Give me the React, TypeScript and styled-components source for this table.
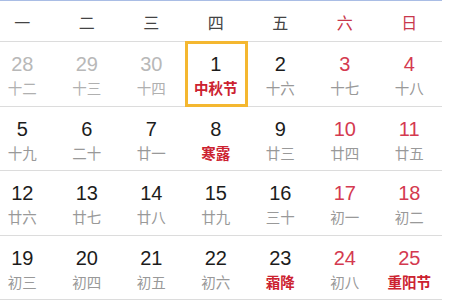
import * as React from "react";
import styled, { createGlobalStyle } from "styled-components";

type Day = {
  n: number;
  lunar: string;
  other?: boolean;
  fest?: boolean;
  today?: boolean;
};

const heads = ["一", "二", "三", "四", "五", "六", "日"];

const weeks: Day[][] = [
  [
    { n: 28, lunar: "十二", other: true },
    { n: 29, lunar: "十三", other: true },
    { n: 30, lunar: "十四", other: true },
    { n: 1, lunar: "中秋节", fest: true, today: true },
    { n: 2, lunar: "十六" },
    { n: 3, lunar: "十七" },
    { n: 4, lunar: "十八" },
  ],
  [
    { n: 5, lunar: "十九" },
    { n: 6, lunar: "二十" },
    { n: 7, lunar: "廿一" },
    { n: 8, lunar: "寒露", fest: true },
    { n: 9, lunar: "廿三" },
    { n: 10, lunar: "廿四" },
    { n: 11, lunar: "廿五" },
  ],
  [
    { n: 12, lunar: "廿六" },
    { n: 13, lunar: "廿七" },
    { n: 14, lunar: "廿八" },
    { n: 15, lunar: "廿九" },
    { n: 16, lunar: "三十" },
    { n: 17, lunar: "初一" },
    { n: 18, lunar: "初二" },
  ],
  [
    { n: 19, lunar: "初三" },
    { n: 20, lunar: "初四" },
    { n: 21, lunar: "初五" },
    { n: 22, lunar: "初六" },
    { n: 23, lunar: "霜降", fest: true },
    { n: 24, lunar: "初八" },
    { n: 25, lunar: "重阳节", fest: true },
  ],
];

const App = () => {
  return (
    <Page>
      <GlobalStyle />
      <Calendar>
        <Head>
          {heads.map((h, i) => (
            <HeadCell key={h} $weekend={i >= 5}>
              {h}
            </HeadCell>
          ))}
        </Head>
        {weeks.map((w, wi) => (
          <Week key={wi}>
            {w.map((d, i) => (
              <Cell key={d.n} $today={d.today}>
                <Num $other={d.other} $weekend={i >= 5 && !d.other}>
                  {d.n}
                </Num>
                <Lunar $other={d.other} $fest={d.fest}>
                  {d.lunar}
                </Lunar>
              </Cell>
            ))}
          </Week>
        ))}
      </Calendar>
    </Page>
  );
};
export default App;

const GlobalStyle = createGlobalStyle`
  html, body {
    margin: 0;
    padding: 0;
    background: #fff;
  }
  body {
    font-family: "Liberation Sans", "Noto Sans CJK SC", sans-serif;
  }
`;

const Page = styled.div`
  width: 450px;
  height: 300px;
  overflow: hidden;
  background: #fff;
`;

const Calendar = styled.div`
  width: 451.5px;
  margin-left: -10px;
  border-top: 1px solid #a9bde5;
`;

const Head = styled.div`
  display: grid;
  grid-template-columns: repeat(7, 64.5px);
  height: 41px;
  box-sizing: border-box;
  border-bottom: 1px solid #dcdcdc;
  align-items: center;
`;

const HeadCell = styled.div<{ $weekend?: boolean }>`
  text-align: center;
  font-family: "Noto Sans CJK SC", sans-serif;
  font-size: 16px;
  line-height: 20px;
  padding-top: 1px;
  color: ${(p) => (p.$weekend ? "#c8384c" : "#444")};
`;

const Week = styled.div`
  display: grid;
  grid-template-columns: repeat(7, 64.5px);
  height: 64.5px;
  box-sizing: border-box;
  border-bottom: 1px solid #dcdcdc;
`;

const Cell = styled.div<{ $today?: boolean }>`
  position: relative;
  display: flex;
  flex-direction: column;
  align-items: center;
  padding-top: 10px;
  &::after {
    content: "";
    display: ${(p) => (p.$today ? "block" : "none")};
    position: absolute;
    left: 1px;
    right: 0;
    top: -1px;
    bottom: -1px;
    border: 3px solid #f4b730;
  }
`;

const Num = styled.div<{ $other?: boolean; $weekend?: boolean }>`
  font-family: "Liberation Sans", Arial, sans-serif;
  font-size: 20px;
  line-height: 24px;
  color: ${(p) => (p.$other ? "#b8b8b8" : p.$weekend ? "#d43a50" : "#1c1c1c")};
`;

const Lunar = styled.div<{ $other?: boolean; $fest?: boolean }>`
  font-family: "Noto Sans CJK SC", sans-serif;
  font-size: 14.5px;
  line-height: 24px;
  font-weight: ${(p) => (p.$fest ? 700 : 400)};
  color: ${(p) => (p.$fest ? "#cc2230" : p.$other ? "#b0b0b0" : "#999")};
`;
